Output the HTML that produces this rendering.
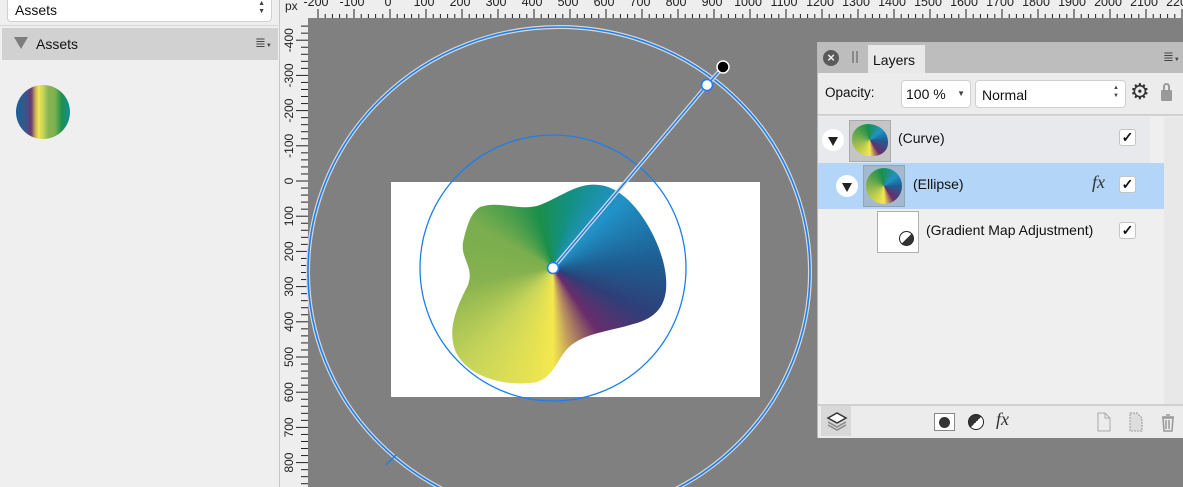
<!DOCTYPE html>
<html style="overflow:hidden;width:1183px;height:487px"><head><meta charset="utf-8"><style>
*{box-sizing:border-box;margin:0;padding:0}
body{width:1183px;height:487px;overflow:hidden;background:#808080;font-family:"Liberation Sans",sans-serif;position:relative;font-size:13px;color:#111}
.abs{position:absolute}
</style></head><body>
<!-- left panel -->
<div class="abs" style="left:0;top:0;width:280px;height:487px;background:#efefef;border-right:1px solid #c8c8c8"></div>
<div class="abs" style="left:7px;top:-4px;width:265px;height:26px;background:#fff;border:1px solid #d0d0d0;border-radius:4px;font-size:14px;padding:5px 0 0 7px">Assets<span class="abs" style="right:6px;top:3px;font-size:7px;line-height:8px;color:#444">▲<br>▼</span></div>
<div class="abs" style="left:0;top:25px;width:280px;height:1px;background:#d6d6d6"></div>
<div class="abs" style="left:2px;top:28px;width:276px;height:32px;background:#d1d1d1;font-size:14px">
 <span class="abs" style="left:12px;top:9px;width:0;height:0;border-left:7px solid transparent;border-right:7px solid transparent;border-top:12px solid #7d7d7d"></span>
 <span class="abs" style="left:34px;top:8px">Assets</span>
 <span class="abs" style="left:253px;top:7px;font-size:13px;color:#444">≣<span style="font-size:6px">▼</span></span>
</div>
<div class="abs" style="left:16px;top:85px;width:54px;height:54px;border-radius:50%;background:linear-gradient(90deg,#1b5f97 0%,#2f5a8e 15%,#6a3a72 28%,#c9b25a 36%,#f2e54d 42%,#c5d55a 50%,#88b552 60%,#7fb14f 72%,#1a9050 85%,#168e92 100%)"></div>
<!-- rulers -->
<div class="abs" style="left:280px;top:0;width:903px;height:18px;background:#eeeeee"></div>
<div class="abs" style="left:280px;top:0;width:28px;height:487px;background:#eeeeee"></div>
<div class="abs" style="left:285px;top:-1px;font-size:12px;color:#222">px</div>
<svg id="rul" class="abs" style="left:0;top:0" width="1183" height="487"></svg>
<!-- canvas -->
<div class="abs" style="left:391px;top:182px;width:369px;height:215px;background:#fff"></div>
<div class="abs" style="left:440px;top:170px;width:240px;height:230px;background:conic-gradient(from 180deg at 113px 98px,#f4e84e 0deg,#c8d55a 40deg,#86b24f 80deg,#79ad4e 120deg,#1a8f4a 165deg,#149083 195deg,#2193c8 225deg,#1d5f93 265deg,#2e3f78 295deg,#6a2c6c 325deg,#c09a5c 348deg,#f4e84e 360deg);clip-path:path('M40,37 C60,30 80,42 100,35 C125,25 140,10 165,16 C195,24 220,70 225,100 C230,130 220,145 200,152 C170,162 145,162 128,178 C115,192 112,212 90,213 C60,216 25,205 15,180 C8,160 15,140 28,115 C35,95 18,88 24,68 C28,52 32,42 40,37 Z')"></div>
<svg class="abs" style="left:0;top:0" width="1183" height="487">
 <ellipse cx="559" cy="272" rx="251" ry="245" fill="none" stroke="#d8d8d8" stroke-width="4"/>
 <ellipse cx="559" cy="272" rx="251" ry="245" fill="none" stroke="#1a7ff0" stroke-width="1.6"/>
 <circle cx="553" cy="268" r="133" fill="none" stroke="#1a7ff0" stroke-width="1.3"/>
 <line x1="553" y1="268" x2="707" y2="85" stroke="#d8d8d8" stroke-width="4"/>
 <line x1="553" y1="268" x2="707" y2="85" stroke="#1a7ff0" stroke-width="1.5"/>
 <line x1="707" y1="85" x2="723" y2="67" stroke="#d8d8d8" stroke-width="4"/>
 <line x1="707" y1="85" x2="723" y2="67" stroke="#1a7ff0" stroke-width="1.5"/>
 <circle cx="553" cy="268" r="5.5" fill="#fff" stroke="#1a7ff0" stroke-width="1.6"/>
 <circle cx="707" cy="85" r="5.5" fill="#fff" stroke="#1a7ff0" stroke-width="1.6"/>
 <circle cx="723" cy="67" r="6" fill="#000" stroke="#fff" stroke-width="1.5"/>
 <line x1="386" y1="465" x2="396" y2="455" stroke="#1a7ff0" stroke-width="1.5"/>
</svg>
<!-- layers panel -->
<div class="abs" style="left:817px;top:42px;width:366px;height:396px;background:#efefef;border-left:1px solid #b8b8b8">
 <div class="abs" style="left:0;top:0;width:366px;height:31px;background:#bdbdbd"></div>
 <div class="abs" style="left:5px;top:8px;width:16px;height:16px;border-radius:50%;background:#5a5a5a;color:#eee;font-size:13px;line-height:16px;text-align:center;font-weight:bold">×</div>
 <div class="abs" style="left:34px;top:9px;width:2px;height:12px;background:#8a8a8a;box-shadow:4px 0 #8a8a8a"></div>
 <div class="abs" style="left:50px;top:3px;width:57px;height:29px;background:#e9e9e9;font-size:14px;padding:7px 0 0 5px">Layers</div>
 <div class="abs" style="left:345px;top:7px;font-size:13px;color:#444">≣<span style="font-size:6px">▼</span></div>
 <div class="abs" style="left:0;top:31px;width:366px;height:43px;background:#ececec;border-bottom:2px solid #d0d0d0"></div>
 <div class="abs" style="left:7px;top:43px;font-size:13.5px">Opacity:</div>
 <div class="abs" style="left:83px;top:38px;width:70px;height:28px;background:#fff;border:1px solid #d0d0d0;border-radius:4px;font-size:14px;padding:5px 0 0 4px">100 %<span class="abs" style="right:5px;top:8px;font-size:8px;color:#444">▼</span></div>
 <div class="abs" style="left:157px;top:38px;width:151px;height:28px;background:#fff;border:1px solid #d0d0d0;border-radius:4px;font-size:14px;padding:6px 0 0 6px">Normal<span class="abs" style="right:6px;top:3px;font-size:6px;line-height:8px;color:#444">▲<br>▼</span></div>
 <div class="abs" style="left:312px;top:39px;font-size:22px;color:#333;line-height:22px">⚙</div>
 <div class="abs" style="left:343px;top:48px;width:11px;height:11px;background:#9a9a9a;border-radius:1px"></div>
 <div class="abs" style="left:345px;top:41px;width:7px;height:9px;border:2px solid #9a9a9a;border-bottom:none;border-radius:4px 4px 0 0"></div>
 <!-- rows -->
 <div class="abs" style="left:0;top:75px;width:332px;height:46px;background:#e7e9ed"></div>
 <div class="abs" style="left:0;top:121px;width:346px;height:46px;background:#b3d5f7"></div>
 <div class="abs" style="left:346px;top:75px;width:20px;height:288px;background:#e8e8e8"></div>
 <div class="abs" style="left:4px;top:87px;width:22px;height:22px;border-radius:50%;background:#fff"></div>
 <div class="abs" style="left:10px;top:95px;border-left:5px solid transparent;border-right:5px solid transparent;border-top:9px solid #222"></div>
 <div class="abs" style="left:31px;top:78px;width:42px;height:42px;background:#c5c5c5;border:1px solid #aaa"></div>
 <div class="abs" style="left:34px;top:82px;width:36px;height:32px;border-radius:45% 55% 40% 50%;background:conic-gradient(from 180deg,#f4e84e,#86b24f 90deg,#1a8f4a 170deg,#2193c8 230deg,#1d5f93 270deg,#6a2c6c 325deg,#f4e84e)"></div>
 <div class="abs" style="left:80px;top:88px;font-size:14px">(Curve)</div>
 <div class="abs" style="left:301px;top:87px;width:17px;height:17px;background:#fff;border:1px solid #c5c5c5;border-radius:3px;font-size:14px;line-height:15px;text-align:center;font-weight:bold">✓</div>
 <div class="abs" style="left:18px;top:133px;width:22px;height:22px;border-radius:50%;background:#fff"></div>
 <div class="abs" style="left:24px;top:141px;border-left:5px solid transparent;border-right:5px solid transparent;border-top:9px solid #222"></div>
 <div class="abs" style="left:45px;top:123px;width:42px;height:42px;background:#a2b9d0;border:1px solid #90a4b8"></div>
 <div class="abs" style="left:48px;top:126px;width:36px;height:36px;border-radius:50%;background:conic-gradient(from 180deg,#f4e84e,#86b24f 90deg,#1a8f4a 170deg,#2193c8 230deg,#1d5f93 270deg,#6a2c6c 325deg,#f4e84e)"></div>
 <div class="abs" style="left:95px;top:134px;font-size:14px">(Ellipse)</div>
 <div class="abs" style="left:274px;top:130px;font-size:18px;font-style:italic;font-family:'Liberation Serif',serif;color:#333">fx</div>
 <div class="abs" style="left:301px;top:134px;width:17px;height:17px;background:#fff;border:1px solid #c5c5c5;border-radius:3px;font-size:14px;line-height:15px;text-align:center;font-weight:bold">✓</div>
 <div class="abs" style="left:59px;top:169px;width:42px;height:42px;background:#fff;border:1px solid #b0b0b0"></div>
 <div class="abs" style="left:81px;top:189px;width:15px;height:15px;border-radius:50%;border:1.5px solid #222;background:linear-gradient(135deg,#fff 50%,#333 50%)"></div>
 <div class="abs" style="left:108px;top:180px;font-size:14px">(Gradient Map Adjustment)</div>
 <div class="abs" style="left:301px;top:180px;width:17px;height:17px;background:#fff;border:1px solid #c5c5c5;border-radius:3px;font-size:14px;line-height:15px;text-align:center;font-weight:bold">✓</div>
 <!-- bottom bar -->
 <div class="abs" style="left:0;top:362px;width:366px;height:34px;background:#ececec;border-top:2px solid #d0d0d0"></div>
 <div class="abs" style="left:3px;top:364px;width:30px;height:30px;background:#d8d8d8"></div>
 <svg class="abs" style="left:8px;top:368px" width="22" height="22"><path d="M2 12 L11 17 L20 12 M2 15 L11 20 L20 15" fill="none" stroke="#888" stroke-width="1.5"/><path d="M2 8 L11 3 L20 8 L11 13Z" fill="#fff" stroke="#333" stroke-width="1.5"/></svg>
 <div class="abs" style="left:116px;top:371px;width:21px;height:18px;background:#fff;border:1px solid #888"></div>
 <div class="abs" style="left:121px;top:375px;width:11px;height:11px;border-radius:50%;background:#333"></div>
 <div class="abs" style="left:150px;top:372px;width:16px;height:16px;border-radius:50%;border:1.5px solid #222;background:linear-gradient(135deg,#333 50%,#fff 50%)"></div>
 <div class="abs" style="left:178px;top:367px;font-size:18px;font-style:italic;font-family:'Liberation Serif',serif;color:#333">fx</div>
 <svg class="abs" style="left:278px;top:370px" width="90" height="22"><path d="M2 1 H9 L14 6 V19 H2Z M9 1 V6 H14" fill="none" stroke="#aaa"/><path d="M34 1 H41 L46 6 V19 H34Z" fill="#ddd" stroke="#999" stroke-dasharray="2 1"/><path d="M66 5 H78 M70 3 H74 M67 6 L68 19 H76 L77 6Z M70 8 V17 M73 8 V17" fill="none" stroke="#999" stroke-width="1.5"/></svg>
</div>
<script>
var s=document.getElementById('rul'),h='';
for(var v=-200;v<=2200;v+=20){var x=390+v*0.36;if(x<308)continue;var m=v%100==0;h+='<line x1="'+x+'" y1="'+(m?9:14)+'" x2="'+x+'" y2="18" stroke="#222" stroke-width="1"/>';if(m)h+='<text x="'+(x-2)+'" y="6" font-size="12.5" text-anchor="middle" fill="#222" font-family="Liberation Sans">'+v+'</text>';}
for(var v=-500;v<=900;v+=20){var y=181+v*0.352;if(y<20)continue;var m=v%100==0;h+='<line x1="'+(m?296:301)+'" y1="'+y+'" x2="308" y2="'+y+'" stroke="#222" stroke-width="1"/>';if(m)h+='<text transform="translate(293,'+y+') rotate(-90)" font-size="12" text-anchor="middle" fill="#222" font-family="Liberation Sans">'+v+'</text>';}
s.innerHTML=h;
</script>
</body></html>
